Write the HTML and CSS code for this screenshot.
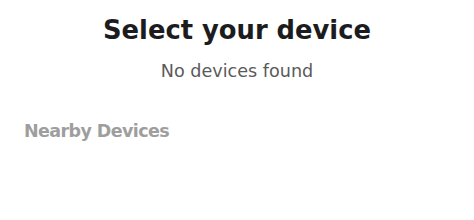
FILE: index.html
```html
<!DOCTYPE html>
<html lang="en">
<head>
    <meta charset="UTF-8">
    <meta name="viewport" content="width=device-width, initial-scale=1.0">
    <title>Select your device</title>
    <link rel="stylesheet" href="styles.css">
</head>
<body>
    <div class="container">
        <div class="header">
            <h1>Select your device</h1>
            <p class="status">No devices found</p>
        </div>

        <h2 class="section-title">Nearby Devices</h2>
        <div class="device-list"></div>
    </div>
</body>
</html>
```

FILE: styles.css
```css
:root {
    --text-color: #1c1c1e;
    --muted-color: #5a5a5a;
    --section-color: #9e9e9e;
    --bg-color: #ffffff;
}

body {
    font-family: 'DejaVu Sans', 'Liberation Sans', sans-serif;
    margin: 0;
    background-color: var(--bg-color);
    color: var(--text-color);
}

.container {
    padding: 15px 24px 0;
}

.header {
    display: flex;
    flex-direction: column;
    align-items: center;
}

h1 {
    margin: 0;
    font-size: 25.8px;
    font-weight: 700;
    line-height: 30px;
}

.status {
    margin: 15px 0 0;
    font-size: 17.6px;
    line-height: 22px;
    color: var(--muted-color);
}

.section-title {
    margin: 38px 0 0;
    font-size: 17.5px;
    font-weight: 700;
    line-height: 22px;
    letter-spacing: -0.6px;
    color: var(--section-color);
}
```
